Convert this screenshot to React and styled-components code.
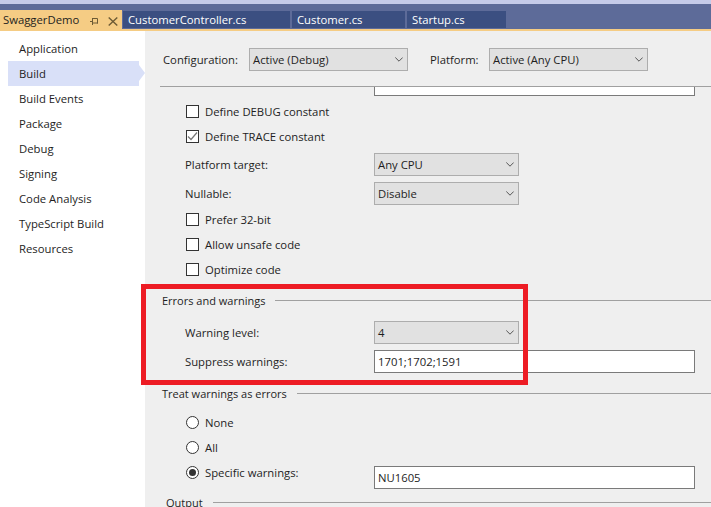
import React from "react";
import styled, { createGlobalStyle } from "styled-components";

const tabs = ["CustomerController.cs", "Customer.cs", "Startup.cs"];
const pages = [
  "Application",
  "Build",
  "Build Events",
  "Package",
  "Debug",
  "Signing",
  "Code Analysis",
  "TypeScript Build",
  "Resources",
];

function Chevron() {
  return (
    <svg width="8" height="5" viewBox="0 0 8 5" fill="none">
      <path d="M0.3 0.5L4 4.2L7.7 0.5" stroke="#555" strokeWidth="1" />
    </svg>
  );
}

function Dropdown({ value, width }) {
  return (
    <Select $width={width}>
      <span>{value}</span>
      <Chevron />
    </Select>
  );
}

function CheckRow({ label, checked }) {
  return (
    <OptionRow>
      <CheckBox>
        {checked && (
          <svg width="11" height="11" viewBox="0 0 11 11" fill="none">
            <path d="M1 5.5L4 8.5L10 1.5" stroke="#777" strokeWidth="1.2" />
          </svg>
        )}
      </CheckBox>
      {label}
    </OptionRow>
  );
}

function RadioRow({ label, selected, children }) {
  return (
    <OptionRow>
      <Radio $selected={selected} />
      <RadioLabel $selected={selected}>{label}</RadioLabel>
      {children}
    </OptionRow>
  );
}

export default function App() {
  return (
    <>
      <GlobalStyle />
      <Window>
        <TabStrip>
          <ActiveTab>
            <TabTitle>SwaggerDemo</TabTitle>
            <svg width="8" height="7" viewBox="0 0 8 7" fill="none">
              <path d="M0 3.5H3M2.5 0V7M2.5 0.5H7.5V5.5M2.5 5H8" stroke="#6d5b35" strokeWidth="1" />
            </svg>
            <svg width="10" height="9" viewBox="0 0 10 9" fill="none">
              <path d="M0.7 0.5L9.3 8.5M9.3 0.5L0.7 8.5" stroke="#6d5b35" strokeWidth="1.4" />
            </svg>
          </ActiveTab>
          {tabs.map((tab) => (
            <Tab key={tab}>{tab}</Tab>
          ))}
        </TabStrip>
        <Body>
          <Sidebar>
            {pages.map((page) => (
              <NavItem key={page} $active={page === "Build"}>
                {page}
              </NavItem>
            ))}
          </Sidebar>
          <Content>
            <ConfigBar>
              <ConfigLabel $width={86}>Configuration:</ConfigLabel>
              <Dropdown value="Active (Debug)" width={159} />
              <ConfigLabel $width={59} $gap={22}>
                Platform:
              </ConfigLabel>
              <Dropdown value="Active (Any CPU)" width={159} />
            </ConfigBar>
            <Scroller>
              <ClippedField />
              <Gap $size={3} />
              <CheckRow label="Define DEBUG constant" />
              <CheckRow label="Define TRACE constant" checked />
              <Gap $size={4} />
              <FieldRow>
                <FieldLabel>Platform target:</FieldLabel>
                <Dropdown value="Any CPU" width={145} />
              </FieldRow>
              <Gap $size={6} />
              <FieldRow>
                <FieldLabel>Nullable:</FieldLabel>
                <Dropdown value="Disable" width={145} />
              </FieldRow>
              <Gap $size={2} />
              <CheckRow label="Prefer 32-bit" />
              <CheckRow label="Allow unsafe code" />
              <CheckRow label="Optimize code" />
              <Gap $size={8} />
              <Highlighted>
                <Heading>Errors and warnings</Heading>
                <Gap $size={11} />
                <FieldRow>
                  <FieldLabel>Warning level:</FieldLabel>
                  <Dropdown value="4" width={145} />
                </FieldRow>
                <Gap $size={6} />
                <FieldRow>
                  <FieldLabel>Suppress warnings:</FieldLabel>
                  <TextField>1701;1702;1591</TextField>
                </FieldRow>
                <RedBox />
              </Highlighted>
              <Gap $size={10} />
              <Heading>Treat warnings as errors</Heading>
              <Gap $size={7} />
              <RadioRow label="None" />
              <RadioRow label="All" />
              <RadioRow label="Specific warnings:" selected>
                <TextField $raised>NU1605</TextField>
              </RadioRow>
              <Gap $size={7} />
              <Heading $indent={4}>Output</Heading>
            </Scroller>
          </Content>
        </Body>
      </Window>
    </>
  );
}

const GlobalStyle = createGlobalStyle`
  html, body {
    margin: 0;
    height: 507px;
    overflow: hidden;
  }
  body {
    font-family: "Open Sans", "Noto Sans", sans-serif;
    font-size: 11.3px;
    color: #1e1e1e;
  }
`;

const Window = styled.div`
  width: 711px;
  height: 507px;
  display: flex;
  flex-direction: column;
  overflow: hidden;
  background: #fff;
`;

const TabStrip = styled.div`
  height: 25px;
  flex: none;
  display: flex;
  align-items: flex-end;
  gap: 2px;
  border-top: 4px solid #c5cbe9;
  border-bottom: 2px solid #f5cc84;
  background: #5d6b99;
`;

const ActiveTab = styled.div`
  width: 119px;
  height: 19px;
  padding-left: 3px;
  display: flex;
  align-items: center;
  background: #f5cc84;
  color: #1e1e1e;
  margin-right: -1px;

  svg {
    flex: none;
    margin-top: 4px;
  }
  svg:last-child {
    margin-left: 10px;
    margin-top: 3px;
  }
`;

const TabTitle = styled.span`
  width: 87px;
  flex: none;
`;

const Tab = styled.div`
  height: 17px;
  margin-bottom: 1px;
  padding: 0 5px;
  display: flex;
  align-items: center;
  background: #3b4f81;
  color: #fff;

  &:nth-child(2) {
    width: 157px;
  }
  &:nth-child(3) {
    width: 103px;
  }
  &:nth-child(4) {
    width: 89px;
  }
`;

const Body = styled.div`
  flex: 1;
  min-height: 0;
  display: flex;
`;

const Sidebar = styled.nav`
  width: 145px;
  flex: none;
  padding-top: 5px;
  box-sizing: border-box;
  background: #fff;
`;

const NavItem = styled.div`
  position: relative;
  height: 25px;
  width: 131px;
  margin-left: 8px;
  padding-left: 11px;
  box-sizing: border-box;
  display: flex;
  align-items: center;
  background: ${(p) => (p.$active ? "#d9e0f8" : "transparent")};

  ${(p) =>
    p.$active &&
    `&::after {
      content: "";
      position: absolute;
      left: 100%;
      top: 4px;
      border-left: 6px solid #d9e0f8;
      border-top: 8px solid transparent;
      border-bottom: 8px solid transparent;
    }`}
`;

const Content = styled.main`
  flex: 1;
  min-width: 0;
  display: flex;
  flex-direction: column;
  background: #efefef;
`;

const ConfigBar = styled.div`
  height: 56px;
  flex: none;
  margin-left: 15px;
  padding: 17px 0 0 3px;
  box-sizing: border-box;
  display: flex;
  align-items: flex-start;
  border-bottom: 1px solid #a0a0a0;
`;

const ConfigLabel = styled.div`
  width: ${(p) => p.$width}px;
  margin-left: ${(p) => p.$gap || 0}px;
  line-height: 23px;
`;

const Select = styled.div`
  width: ${(p) => p.$width}px;
  height: 23px;
  flex: none;
  padding: 0 4px 0 3px;
  box-sizing: border-box;
  display: flex;
  align-items: center;
  justify-content: space-between;
  border: 1px solid #adadad;
  background: #e1e1e1;
`;

const Scroller = styled.div`
  flex: 1;
  min-height: 0;
  padding: 0 16px 0 15px;
`;

const ClippedField = styled.div`
  height: 9px;
  margin-left: 214px;
  box-sizing: border-box;
  border: 1px solid #7a7a7a;
  border-top: none;
  background: #fff;
`;

const Gap = styled.div`
  height: ${(p) => p.$size}px;
`;

const OptionRow = styled.div`
  height: 25px;
  padding-left: 26px;
  display: flex;
  align-items: center;
  gap: 6px;
`;

const CheckBox = styled.span`
  width: 13px;
  height: 13px;
  flex: none;
  box-sizing: border-box;
  display: flex;
  align-items: center;
  justify-content: center;
  border: 1px solid #333;
  background: #fff;
`;

const Radio = styled.span`
  position: relative;
  width: 13px;
  height: 13px;
  flex: none;
  box-sizing: border-box;
  border: 1px solid #333;
  border-radius: 50%;
  background: #fff;

  ${(p) =>
    p.$selected &&
    `&::after {
      content: "";
      position: absolute;
      inset: 2px;
      border-radius: 50%;
      background: #333;
    }`}
`;

const RadioLabel = styled.span`
  width: ${(p) => (p.$selected ? "163px" : "auto")};
`;

const FieldRow = styled.div`
  height: 23px;
  padding-left: 25px;
  display: flex;
  align-items: center;
`;

const FieldLabel = styled.div`
  width: 189px;
  flex: none;
`;

const TextField = styled.div`
  flex: 1;
  height: 23px;
  padding-left: 3px;
  box-sizing: border-box;
  display: flex;
  align-items: center;
  border: 1px solid #7a7a7a;
  background: #fff;
  ${(p) => p.$raised && "margin-top: 10px;"}
`;

const Highlighted = styled.section`
  position: relative;
`;

const RedBox = styled.div`
  position: absolute;
  left: -19px;
  right: 167px;
  top: -6px;
  bottom: -12px;
  border: 5px solid #ed1c24;
  pointer-events: none;
`;

const Heading = styled.div`
  height: 20px;
  padding-left: ${(p) => 2 + (p.$indent || 0)}px;
  margin-right: -16px;
  display: flex;
  align-items: center;
  gap: 10px;
  font-size: 11px;

  &::after {
    content: "";
    flex: 1;
    height: 1px;
    background: #a0a0a0;
  }
`;
